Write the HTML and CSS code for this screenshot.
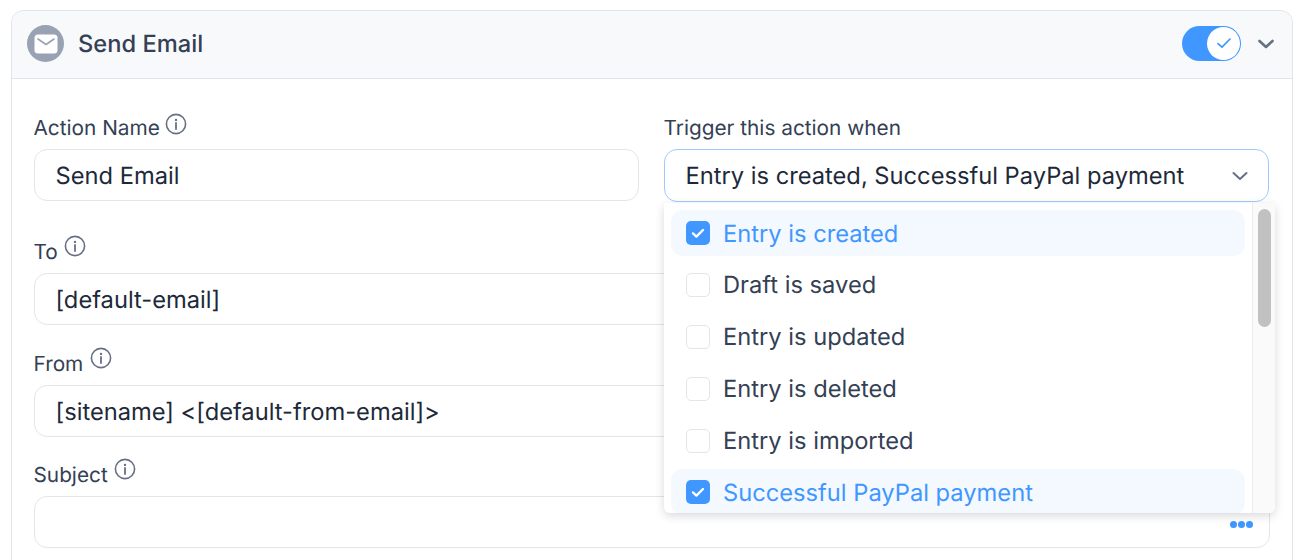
FILE: index.html
```html
<!DOCTYPE html>
<html lang="en">
<head>
<meta charset="utf-8">
<title>Send Email</title>
<link rel="stylesheet" href="styles.css">
</head>
<body>
<svg class="defs" width="0" height="0" aria-hidden="true">
  <symbol id="info" viewBox="0 0 22 22">
    <circle cx="11" cy="11" r="9.6" fill="none" stroke="currentColor" stroke-width="1.6"/>
    <circle cx="11" cy="6.9" r="1.2" fill="currentColor"/>
    <path d="M11 10v6" fill="none" stroke="currentColor" stroke-width="1.8" stroke-linecap="round"/>
  </symbol>
  <symbol id="tick" viewBox="0 0 24 24">
    <rect width="24" height="24" rx="5" fill="#3f97ff"/>
    <path d="M7 12.4l3.4 3.2L17 9" fill="none" stroke="#fff" stroke-width="2.4" stroke-linecap="round" stroke-linejoin="round"/>
  </symbol>
</svg>
<section class="card">
  <header class="head">
    <span class="mail">
      <svg width="24" height="20" viewBox="0 0 24 20"><rect x="0.5" y="0.5" width="23" height="19" rx="3.5" fill="#fff"/><path d="M4 5l8 5.5L20 5" fill="none" stroke="#98a2b3" stroke-width="1.6" stroke-linecap="round" stroke-linejoin="round"/></svg>
    </span>
    <h2 class="title">Send Email</h2>
    <span class="toggle">
      <span class="knob">
        <svg width="16" height="12" viewBox="0 0 16 12"><path d="M2 6.6l4 3.6L14 2" fill="none" stroke="#3f97ff" stroke-width="1.7" stroke-linecap="round" stroke-linejoin="round"/></svg>
      </span>
    </span>
    <svg class="head-chev" width="18" height="12" viewBox="0 0 18 12"><path d="M2.5 3l6.5 6 6.5-6" fill="none" stroke="#667085" stroke-width="2.6" stroke-linecap="round" stroke-linejoin="round"/></svg>
  </header>
  <div class="body">
    <div class="row-two">
      <div class="field field-first">
        <div class="label"><span>Action Name</span><svg class="info"><use href="#info"/></svg></div>
        <div class="input">Send Email</div>
      </div>
      <div class="field field-first trigger">
        <div class="label"><span>Trigger this action when</span></div>
        <div class="input select">
          <span>Entry is created, Successful PayPal payment</span>
          <svg width="18" height="12" viewBox="0 0 18 12"><path d="M2.5 3l6.5 6 6.5-6" fill="none" stroke="#667085" stroke-width="2" stroke-linecap="round" stroke-linejoin="round"/></svg>
        </div>
        <div class="menu">
          <ul class="options">
            <li class="option on"><svg class="box"><use href="#tick"/></svg>Entry is created</li>
            <li class="option"><span class="box empty"></span>Draft is saved</li>
            <li class="option"><span class="box empty"></span>Entry is updated</li>
            <li class="option"><span class="box empty"></span>Entry is deleted</li>
            <li class="option"><span class="box empty"></span>Entry is imported</li>
            <li class="option on"><svg class="box"><use href="#tick"/></svg>Successful PayPal payment</li>
          </ul>
          <div class="scroll"><div class="thumb"></div></div>
        </div>
      </div>
    </div>
    <div class="field">
      <div class="label"><span>To</span><svg class="info"><use href="#info"/></svg></div>
      <div class="input">[default-email]</div>
    </div>
    <div class="field">
      <div class="label"><span>From</span><svg class="info"><use href="#info"/></svg></div>
      <div class="input">[sitename] &lt;[default-from-email]&gt;</div>
    </div>
    <div class="field field-last">
      <div class="label"><span>Subject</span><svg class="info"><use href="#info"/></svg></div>
      <div class="input subject"><span class="dots"><i></i><i></i><i></i></span></div>
    </div>
  </div>
</section>
</body>
</html>
```

FILE: styles.css
```css
* { box-sizing: border-box; }
html, body { height: 100%; }
body {
  margin: 0;
  background: #fff;
  overflow: hidden;
  font-family: Inter, "Liberation Sans", sans-serif;
  text-rendering: geometricPrecision;
  color: #344054;
  padding: 10px 7px 0 11px;
}
.defs { position: absolute; }
.card {
  border: 1.5px solid #e3e5ec;
  border-bottom: 0;
  border-radius: 13px 13px 0 0;
  height: 570px;
}
.head {
  display: flex;
  align-items: center;
  height: 67.5px;
  padding: 0 17px 1px 15px;
  background: #f8f9fb;
  border-bottom: 1.5px solid #e3e5ec;
  border-radius: 12px 12px 0 0;
}
.mail {
  width: 37px;
  height: 37px;
  border-radius: 50%;
  background: #98a2b3;
  display: flex;
  align-items: center;
  justify-content: center;
}
.title {
  margin: 0 0 0 14px;
  font-size: 23.7px;
  font-weight: 500;
  flex: 1;
}
.toggle {
  width: 59px;
  height: 35px;
  margin-top: -1px;
  border-radius: 18px;
  background: #3f97ff;
  display: flex;
  justify-content: flex-end;
  align-items: center;
  padding-right: 1px;
}
.knob {
  width: 33px;
  height: 33px;
  border-radius: 50%;
  background: #fff;
  display: flex;
  align-items: center;
  justify-content: center;
}
.head-chev { margin-left: 16px; }
.body { padding: 34px 22.5px 0 21.5px; }
.row-two {
  display: grid;
  grid-template-columns: 605px 605px;
  gap: 25px;
  margin-bottom: 35px;
}
.field { margin-top: 24px; }
.row-two + .field { margin-top: 0; }
.field-last { margin-top: 23px; }
.field-first { margin-top: 0; }
.trigger { position: relative; }
.label {
  display: flex;
  align-items: flex-start;
  height: 36px;
  font-size: 20.8px;
  line-height: 32px;
  gap: 6.5px;
  white-space: nowrap;
}
.info { width: 22px; height: 22px; color: #667085; margin-top: -2px; }
.field-first .label { gap: 5px; }
.field-first .info { margin-top: 0; }
.input {
  height: 52px;
  border: 1.5px solid #e3e5ec;
  border-radius: 13px;
  padding: 1px 21px 0;
  display: flex;
  align-items: center;
  font-size: 23.7px;
  color: #1d2939;
  background: #fff;
}
.select {
  height: 53px;
  border-color: #9fcaff;
  justify-content: space-between;
  padding-right: 19px;
}
.subject { justify-content: flex-end; align-items: flex-end; padding: 0 16px 19px; }
.dots { display: flex; gap: 1px; }
.dots i { width: 7px; height: 7px; border-radius: 50%; background: #3f97ff; }
.menu {
  position: absolute;
  top: 90px;
  left: 0;
  width: 611.5px;
  height: 310px;
  display: flex;
  background: #fff;
  border-radius: 0 0 6px 6px;
  box-shadow: 0 3px 10px rgba(16, 24, 40, .16);
  overflow: hidden;
  z-index: 2;
}
.options {
  flex: 1;
  list-style: none;
  margin: 0;
  padding: 7px 7px 0;
  min-width: 0;
}
.option {
  height: 46px;
  margin-bottom: 5.9px;
  border-radius: 12px;
  display: flex;
  align-items: center;
  padding: 1px 0 0 15px;
  font-size: 23.7px;
  color: #344054;
}
.option.on { background: #f4f9ff; color: #3f97ff; }
.box { width: 24px; height: 24px; margin-right: 13.5px; flex: none; }
.box.empty { border: 1.5px solid #e3e5ec; border-radius: 5px; background: #fff; }
.scroll {
  width: 23px;
  flex: none;
  background: #fafafa;
  border-left: 1.5px solid #ebebeb;
  padding: 6px 0 0 4.5px;
}
.thumb { width: 13px; height: 118px; border-radius: 7px; background: #c1c1c1; }
```
